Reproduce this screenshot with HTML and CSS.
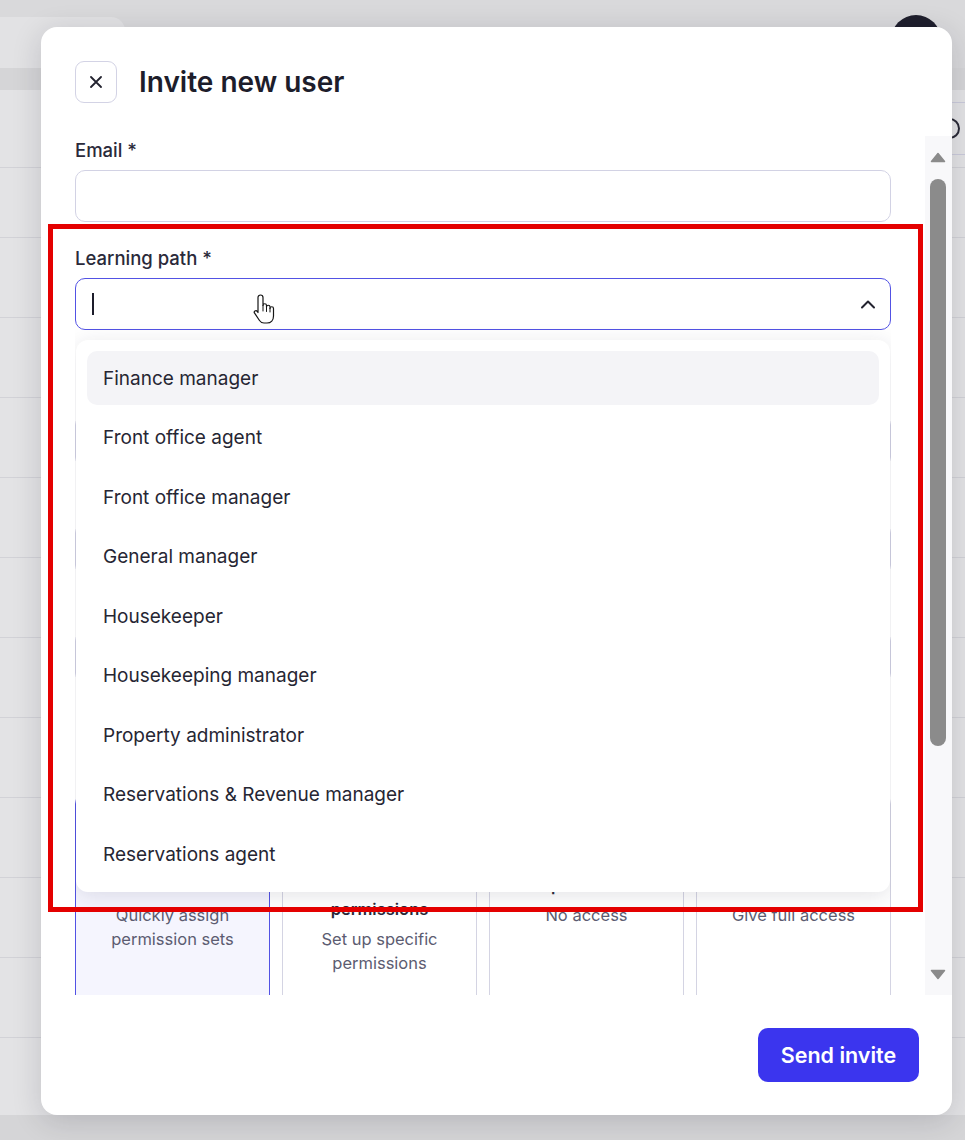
FILE: index.html
```html
<!DOCTYPE html>
<html lang="en">
<head>
<meta charset="utf-8">
<title>Invite new user</title>
<link rel="stylesheet" href="styles.css">
</head>
<body>
<div class="page">
  <header class="topbar">
    <div class="tab"></div>
    <div class="avatar"></div>
  </header>
  <div class="thead"></div>
  <div class="rows">
    <div class="row row-first"><div class="search"><span class="search-ring"></span></div></div>
    <div class="row row-second"></div>
    <div class="row"></div>
    <div class="row"></div>
    <div class="row"></div>
    <div class="row"></div>
    <div class="row"></div>
    <div class="row"></div>
    <div class="row"></div>
    <div class="row"></div>
    <div class="row"></div>
    <div class="row"></div>
  </div>
</div>

<div class="modal" role="dialog" aria-label="Invite new user">
  <div class="modal-head">
    <button class="close-btn" aria-label="Close">
      <svg width="12" height="12" viewBox="0 0 12 12"><path d="M1 1L11 11M11 1L1 11" stroke="#23232f" stroke-width="1.8" stroke-linecap="round"/></svg>
    </button>
    <h1 class="modal-title">Invite new user</h1>
  </div>

  <div class="modal-body">
    <div class="scroll-content">
      <div class="field">
        <label class="label">Email *</label>
        <div class="input"></div>
      </div>

      <div class="field field-lp">
        <label class="label">Learning path *</label>
        <div class="input input-focus">
          <span class="caret"></span>
          <svg class="chev" width="16" height="10" viewBox="0 0 16 10"><path d="M2 8.5L8 2.5L14 8.5" fill="none" stroke="#23232f" stroke-width="2" stroke-linecap="round" stroke-linejoin="round"/></svg>
          <svg class="hand" width="22" height="30" viewBox="0 0 22 30"><path d="M5 3.5a2.5 2.5 0 0 1 5 0V11.5a1.75 1.75 0 0 1 3.5 0V13a1.75 1.75 0 0 1 3.5 0V14.5a1.75 1.75 0 0 1 3.5 0V22c0 4-2.5 7-6.5 7H11c-2 0-3.5-1-4.5-2.5L1.6 19.2a1.6 1.6 0 0 1 2.6-1.9L5 18.5Z" fill="#fff" stroke="#151515" stroke-width="1.2" stroke-linejoin="round"/><path d="M10 11.5V17M13.5 13V17.5M17 14.5V18" stroke="#151515" stroke-width="1" stroke-linecap="round"/></svg>
        </div>

        <ul class="dropdown">
          <li class="option active">Finance manager</li>
          <li class="option">Front office agent</li>
          <li class="option">Front office manager</li>
          <li class="option">General manager</li>
          <li class="option">Housekeeper</li>
          <li class="option">Housekeeping manager</li>
          <li class="option">Property administrator</li>
          <li class="option">Reservations &amp; Revenue manager</li>
          <li class="option">Reservations agent</li>
        </ul>
      </div>

      <div class="field field-hidden"><div class="input"></div></div>
      <div class="field field-hidden"><div class="input"></div></div>
      <div class="field field-hidden"><div class="input"></div></div>

      <div class="cards">
        <div class="card selected">
          <div class="card-icon"></div>
          <div class="card-title">Permission sets</div>
          <div class="card-desc">Quickly assign permission sets</div>
        </div>
        <div class="card">
          <div class="card-icon"></div>
          <div class="card-title">Custom permissions</div>
          <div class="card-desc">Set up specific permissions</div>
        </div>
        <div class="card">
          <div class="card-icon"></div>
          <div class="card-title">No permissions</div>
          <div class="card-desc">No access</div>
        </div>
        <div class="card">
          <div class="card-icon"></div>
          <div class="card-title">Full access</div>
          <div class="card-desc">Give full access</div>
        </div>
      </div>
    </div>

    <div class="scrollbar">
      <svg class="arrow" width="16" height="11" viewBox="0 0 16 11"><path d="M8 1.5L14.5 9.5H1.5Z" fill="#8b8b8b" stroke="#8b8b8b" stroke-width="1.5" stroke-linejoin="round"/></svg>
      <div class="thumb"></div>
      <svg class="arrow arrow-down" width="16" height="11" viewBox="0 0 16 11"><path d="M8 9.5L14.5 1.5H1.5Z" fill="#8b8b8b" stroke="#8b8b8b" stroke-width="1.5" stroke-linejoin="round"/></svg>
    </div>
  </div>

  <div class="modal-foot">
    <button class="send-btn">Send invite</button>
  </div>
</div>

<div class="annotation"></div>
</body>
</html>
```

FILE: styles.css
```css
* { box-sizing: border-box; }
html, body { margin: 0; padding: 0; }
body {
  width: 965px;
  height: 1140px;
  overflow: hidden;
  position: relative;
  background: #d5d5d7;
  font-family: Inter, "Noto Sans", "Liberation Sans", sans-serif;
}

/* background page */
.page { height: 1115px; background: #e3e3e5; overflow: hidden; }
.topbar {
  height: 68px;
  background: #d9d9db;
  display: flex;
  justify-content: space-between;
  align-items: flex-start;
}
.tab {
  margin-top: 17px;
  width: 125px;
  height: 51px;
  background: #e2e2e4;
  border-radius: 0 14px 0 0;
}
.avatar {
  margin-top: 15px;
  margin-right: 24px;
  width: 50px;
  height: 50px;
  border-radius: 50%;
  background: #1f1f2d;
}
.thead { height: 22px; background: #d5d5d7; }
.row {
  height: 80px;
  border-bottom: 1px solid #d2d2d7;
  display: flex;
  justify-content: flex-end;
  align-items: center;
}
.row-first { height: 78px; }
.row-second { height: 70px; }
.search {
  width: 320px;
  height: 53px;
  border-top: 1px solid #cbcbdb;
  border-bottom: 1px solid #cbcbdb;
  display: flex;
  justify-content: flex-end;
  align-items: center;
  padding-right: 5px;
}
.search-ring {
  width: 21px;
  height: 21px;
  border: 2px solid #2a2a36;
  border-radius: 50%;
}

/* modal */
.modal {
  position: absolute;
  left: 41px;
  top: 27px;
  width: 911px;
  height: 1088px;
  background: #fff;
  border-radius: 16px;
  box-shadow: 0 6px 30px rgba(20, 20, 40, 0.16);
  display: flex;
  flex-direction: column;
  overflow: hidden;
}
.modal-head {
  height: 76px;
  padding: 34px 34px 0;
  display: flex;
  align-items: center;
  gap: 22px;
}
.close-btn {
  width: 42px;
  height: 42px;
  padding: 0;
  border: 1px solid #d3d3e5;
  border-radius: 9px;
  background: #fff;
  display: flex;
  align-items: center;
  justify-content: center;
}
.modal-title {
  margin: 0;
  font-size: 28px;
  line-height: 34px;
  font-weight: 600;
  color: #1d1d2b;
}

.modal-body {
  margin-top: 33px;
  height: 859px;
  display: flex;
}
.scroll-content {
  width: 816px;
  margin-left: 34px;
  height: 859px;
  overflow: hidden;
  padding-top: 4px;
}
.field { margin-bottom: 26px; }
.field-lp { position: relative; margin-bottom: 55px; }
.field-hidden { padding-top: 30px; }
.label {
  display: block;
  font-size: 18.5px;
  line-height: 20px;
  font-weight: 500;
  color: #2a2a3a;
  margin-bottom: 10px;
}
.input {
  height: 52px;
  border: 1px solid #d2d2e4;
  border-radius: 10px;
  background: #fff;
}
.input-focus {
  position: relative;
  border: 1.5px solid #5252e4;
  display: flex;
  align-items: center;
  justify-content: space-between;
  padding: 0 14px 0 15.5px;
}
.caret {
  width: 2px;
  height: 22px;
  background: #1d1d2b;
}
.hand {
  position: absolute;
  left: 177px;
  top: 15px;
}

.dropdown {
  position: absolute;
  top: 92px;
  left: 1px;
  right: 1px;
  z-index: 5;
  margin: 0;
  padding: 11px;
  list-style: none;
  background: #fff;
  border-radius: 12px;
  box-shadow: 0 4px 22px rgba(30, 30, 60, 0.12);
  display: flex;
  flex-direction: column;
  gap: 5.5px;
}
.option {
  height: 54px;
  padding: 0 16px;
  display: flex;
  align-items: center;
  font-size: 19px;
  color: #262633;
  border-radius: 10px;
}
.option.active { background: #f4f4f7; }

.cards {
  margin-top: 109px;
  display: grid;
  grid-template-columns: repeat(4, 1fr);
  gap: 12px;
}
.card {
  height: 260px;
  border: 1px solid #d4d4e3;
  border-radius: 12px;
  padding: 20px 24px;
  text-align: center;
  background: #fff;
}
.card.selected {
  border: 1.5px solid #5252e4;
  background: #f5f5fe;
}
.card-icon {
  width: 40px;
  height: 40px;
  margin: 0 auto 20px;
  border-radius: 10px;
  background: #ececf6;
}
.card-title {
  font-size: 16.5px;
  line-height: 24px;
  font-weight: 600;
  color: #2a2a3a;
}
.card-desc {
  margin-top: 6px;
  font-size: 16.5px;
  line-height: 24px;
  color: #5c5c71;
}

.scrollbar {
  width: 27px;
  margin-left: 34px;
  background: #f8f8fa;
  display: flex;
  flex-direction: column;
  align-items: flex-start;
  padding: 16px 0 15px 5px;
}
.thumb {
  margin-top: 16px;
  width: 16px;
  height: 567px;
  border-radius: 8px;
  background: #8b8b8b;
}
.arrow-down { margin-top: auto; }

.modal-foot {
  flex: 1;
  display: flex;
  justify-content: flex-end;
  align-items: center;
  padding-right: 33px;
}
.send-btn {
  width: 161px;
  height: 54px;
  border: none;
  border-radius: 10px;
  background: #3b35ee;
  color: #fff;
  font-family: Inter, "Noto Sans", sans-serif;
  font-size: 21.5px;
  font-weight: 600;
}

/* screenshot annotation overlay */
.annotation {
  position: absolute;
  left: 48px;
  top: 224px;
  width: 875px;
  height: 688px;
  border: 5px solid #e40000;
  pointer-events: none;
  z-index: 10;
}
```
